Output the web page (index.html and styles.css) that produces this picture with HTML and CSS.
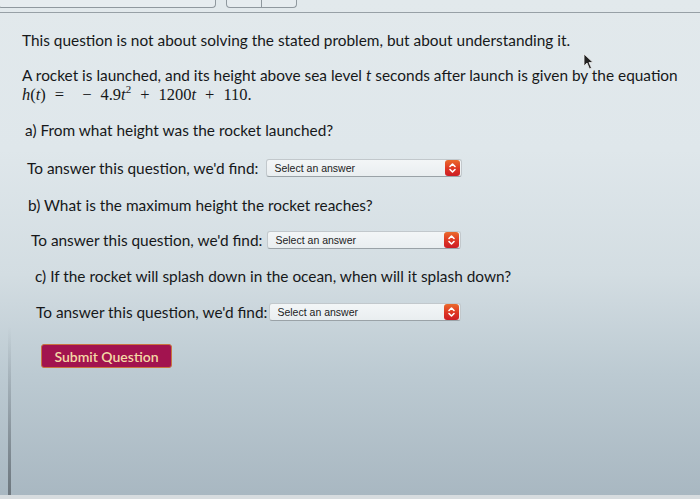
FILE: index.html
```html
<!DOCTYPE html>
<html>
<head>
<meta charset="utf-8">
<link rel="stylesheet" href="styles.css">
</head>
<body>
<div class="screen">
  <div class="topbar">
    <div class="tab tab-wide"></div>
    <div class="tab tab-split"><span class="tab-half"></span><span class="tab-half"></span></div>
  </div>
  <div class="frame">
    <div class="edge"></div>
    <div class="content">
      <p class="line l1">This question is not about solving the stated problem, but about understanding it.</p>
      <div class="para l2">
        <p class="line">A rocket is launched, and its height above sea level <i class="var">t</i> seconds after launch is given by the equation</p>
        <p class="math"><i>h</i>(<i>t</i>)<span class="op">=</span><span class="op">−</span>4.9<i>t</i><sup>2</sup><span class="op">+</span>1200<i>t</i><span class="op">+</span>110.</p>
      </div>
      <p class="line q qa">a) From what height was the rocket launched?</p>
      <div class="row ra">
        <span class="line">To answer this question, we'd find:</span>
        <div class="select sa"><span class="select-text">Select an answer</span><span class="arrows"><svg width="9" height="12" viewBox="0 0 9 12"><path d="M2 4.5 L4.5 2 L7 4.5 M2 7.5 L4.5 10 L7 7.5" fill="none" stroke="#fff" stroke-width="1.6" stroke-linecap="round" stroke-linejoin="round"/></svg></span></div>
      </div>
      <p class="line q qb">b) What is the maximum height the rocket reaches?</p>
      <div class="row rb">
        <span class="line">To answer this question, we'd find:</span>
        <div class="select sb"><span class="select-text">Select an answer</span><span class="arrows"><svg width="9" height="12" viewBox="0 0 9 12"><path d="M2 4.5 L4.5 2 L7 4.5 M2 7.5 L4.5 10 L7 7.5" fill="none" stroke="#fff" stroke-width="1.6" stroke-linecap="round" stroke-linejoin="round"/></svg></span></div>
      </div>
      <p class="line q qc">c) If the rocket will splash down in the ocean, when will it splash down?</p>
      <div class="row rc">
        <span class="line">To answer this question, we'd find:</span>
        <div class="select sc"><span class="select-text">Select an answer</span><span class="arrows"><svg width="9" height="12" viewBox="0 0 9 12"><path d="M2 4.5 L4.5 2 L7 4.5 M2 7.5 L4.5 10 L7 7.5" fill="none" stroke="#fff" stroke-width="1.6" stroke-linecap="round" stroke-linejoin="round"/></svg></span></div>
      </div>
      <div class="submit-row"><button class="submit">Submit Question</button></div>
    </div>
  </div>
  <div class="bottom"></div>
  <svg class="cursor" width="12" height="18" viewBox="0 0 12 18"><path d="M1 1 L1 13 L4 10 L6.5 16 L8.5 15 L6 9.5 L10 9.5 Z" fill="#222" stroke="#eee" stroke-width="0.8"/></svg>
</div>
</body>
</html>
```
FILE: styles.css
```css
* { box-sizing: border-box; }
html, body { margin: 0; padding: 0; }
body {
  width: 700px;
  height: 499px;
  overflow: hidden;
  font-family: "Lato", "Open Sans", sans-serif;
  color: #16181a;
}
.screen {
  position: relative;
  width: 700px;
  height: 499px;
  display: flex;
  flex-direction: column;
  background: linear-gradient(180deg, #e2e9ec 0%, #dfe7eb 30%, #d3dde2 55%, #bccad2 75%, #a8b7c1 100%);
}
.topbar {
  height: 13px;
  display: flex;
  align-items: flex-start;
  gap: 10px;
  border-bottom: 1px solid #97a0a6;
  flex-shrink: 0;
}
.tab {
  height: 8px;
  border: 1px solid #8f989e;
  border-top: none;
  border-radius: 0 0 4px 4px;
  background: #e6ecef;
}
.tab-wide { width: 218px; margin-left: -2px; }
.tab-split { width: 71px; display: flex; }
.tab-half { flex: 1; }
.tab-half + .tab-half { border-left: 1px solid #8f989e; }
.frame {
  flex: 1;
  display: flex;
}
.edge {
  width: 3px;
  margin-left: 8px;
  background: linear-gradient(180deg, rgba(110,120,128,0) 65%, rgba(110,120,128,0.45) 82%, #6d777e 100%);
}
.content {
  flex: 1;
  display: flex;
  flex-direction: column;
  padding-top: 18px;
}
p { margin: 0; }
.line {
  font-size: 15.4px;
  line-height: 18px;
  white-space: nowrap;
}
.l1 { margin-left: 11px; }
.l2 { margin-left: 11px; margin-top: 17px; }
.var { font-family: "Lato", sans-serif; }
.math {
  font-family: "Liberation Serif", serif;
  font-size: 16.5px;
  line-height: 21px;
  white-space: nowrap;
}
.math .op { margin: 0 9px; }
.math sup { font-size: 11px; line-height: 0; vertical-align: 7px; }
.q { margin-top: 18px; }
.qa { margin-left: 14px; margin-top: 16px; }
.qb { margin-left: 17px; margin-top: 19px; }
.qc { margin-left: 24px; }
.row {
  display: flex;
  align-items: center;
}
.ra { margin-left: 16px; margin-top: 20px; gap: 8px; }
.rb { margin-left: 20px; margin-top: 17px; gap: 5px; }
.rc { margin-left: 25px; margin-top: 18px; gap: 2px; }
.select {
  height: 18px;
  display: flex;
  align-items: center;
  justify-content: space-between;
  background: linear-gradient(180deg, #f3f6f7, #e9eef0);
  border: 1px solid #c2c8cc;
  border-bottom-color: #9aa2a7;
  border-radius: 3px;
  padding-left: 7px;
  padding-right: 1px;
}
.sa { width: 196px; }
.sb { width: 194px; }
.sc { width: 192px; }
.select-text {
  font-family: "Liberation Sans", Arial, sans-serif;
  font-size: 10.5px;
  color: #222;
}
.arrows {
  width: 15px;
  height: 16px;
  border-radius: 3px;
  background: linear-gradient(180deg, #ea6a2c 0%, #dd3524 55%, #cc1c24 100%);
  display: flex;
  align-items: center;
  justify-content: center;
}
.submit-row {
  margin-top: 23px;
  margin-left: 30px;
}
.submit {
  width: 131px;
  height: 24px;
  padding: 0;
  background: #a2134f;
  border: 1px solid #c9733f;
  border-radius: 3px;
  color: #f4d9a6;
  font-family: "Lato", sans-serif;
  font-size: 14px;
  font-weight: 600;
}
.bottom {
  height: 4px;
  background: #d7dcdf;
  flex-shrink: 0;
}
.cursor {
  position: absolute;
  left: 583px;
  top: 53px;
}
```
